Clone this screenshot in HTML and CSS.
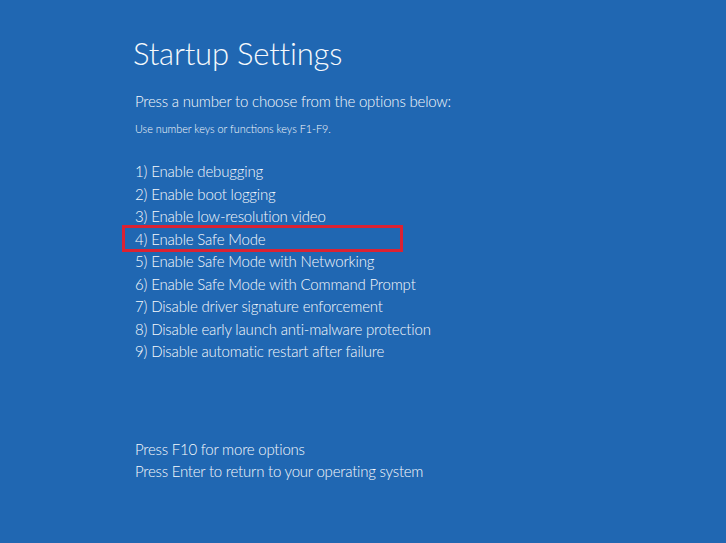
FILE: index.html
```html
<!DOCTYPE html>
<html lang="en">
<head>
    <meta charset="UTF-8">
    <title>Startup Settings</title>
    <link rel="stylesheet" href="styles.css">
</head>
<body>
    <div class="screen">
        <h1>Startup Settings</h1>
        <p class="prompt">Press a number to choose from the options below:</p>
        <p class="hint">Use number keys or functions keys F1-F9.</p>

        <ul class="options">
            <li>1) Enable debugging</li>
            <li>2) Enable boot logging</li>
            <li>3) Enable low-resolution video</li>
            <li class="selected">4) Enable Safe Mode</li>
            <li>5) Enable Safe Mode with Networking</li>
            <li>6) Enable Safe Mode with Command Prompt</li>
            <li>7) Disable driver signature enforcement</li>
            <li>8) Disable early launch anti-malware protection</li>
            <li>9) Disable automatic restart after failure</li>
        </ul>

        <div class="footer">
            <p>Press F10 for more options</p>
            <p>Press Enter to return to your operating system</p>
        </div>
    </div>
</body>
</html>
```

FILE: styles.css
```css
html, body {
    height: 100%;
}
body {
    margin: 0;
    background-color: #2067b2;
    color: #f6f9fc;
    font-family: Lato, "Open Sans", sans-serif;
    font-weight: 300;
}
.screen {
    padding: 33px 0 0 135px;
}
h1 {
    font-size: 31px;
    font-weight: 300;
    line-height: 40px;
    letter-spacing: -0.2px;
    margin: 0 0 0 -2px;
}
.prompt {
    font-size: 15px;
    line-height: 20px;
    letter-spacing: -0.2px;
    margin: 18px 0 0;
}
.hint {
    font-size: 10.8px;
    line-height: 14px;
    margin: 11px 0 0;
}
.options {
    list-style: none;
    margin: 24px 0 0;
    padding: 0;
}
.options li {
    font-size: 15px;
    line-height: 22.5px;
    letter-spacing: -0.17px;
    position: relative;
}
.options li.selected::before {
    content: "";
    position: absolute;
    left: -13px;
    top: -3px;
    width: 275px;
    height: 21px;
    border: 3px solid #dc2232;
}
.footer {
    margin-top: 75px;
}
.footer p {
    font-size: 15px;
    line-height: 22.5px;
    letter-spacing: -0.22px;
    margin: 0;
}
```
